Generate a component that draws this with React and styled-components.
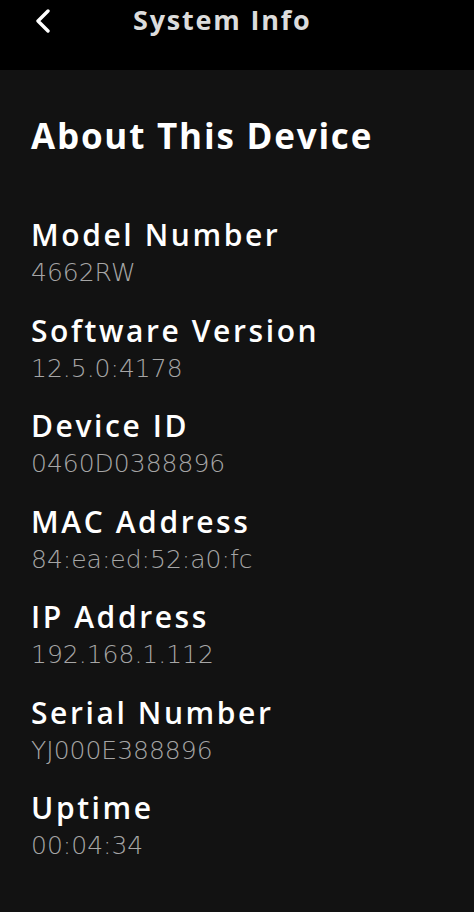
import React from "react";
import styled, { createGlobalStyle } from "styled-components";

const GlobalStyle = createGlobalStyle`
  html, body {
    margin: 0;
    padding: 0;
    background: #121212;
  }
  body {
    font-family: "Open Sans", "Liberation Sans", sans-serif;
  }
`;

const Screen = styled.div`
  width: 474px;
  min-height: 912px;
  background: #121212;
  display: flex;
  flex-direction: column;
`;

const TopBar = styled.header`
  height: 70px;
  background: #000;
  display: flex;
  align-items: flex-start;
`;

const BackButton = styled.button`
  background: none;
  border: none;
  padding: 0;
  margin: 9px 0 0 33px;
  width: 20px;
  height: 24px;
  display: flex;
  align-items: center;
  justify-content: center;
`;

const BarTitle = styled.h1`
  margin: 0 0 0 80px;
  padding-top: 1px;
  font-size: 27px;
  line-height: 38px;
  font-weight: 700;
  color: #dcdcdc;
  letter-spacing: 1.8px;
`;

const Content = styled.main`
  padding: 55px 31px 0 31px;
  display: flex;
  flex-direction: column;
`;

const Heading = styled.h2`
  margin: -12px 0 57px;
  font-size: 35px;
  line-height: 46px;
  font-weight: 700;
  color: #fff;
  letter-spacing: 1.8px;
`;

const InfoList = styled.dl`
  margin: 0;
  display: flex;
  flex-direction: column;
`;

const InfoItem = styled.div`
  height: 95.5px;
`;

const Label = styled.dt`
  font-size: 30px;
  line-height: 38px;
  font-weight: 600;
  color: #fff;
  letter-spacing: 2.6px;
`;

const Value = styled.dd`
  margin: 3px 0 0;
  font-family: "DejaVu Sans", "Open Sans", sans-serif;
  font-size: 25px;
  line-height: 32px;
  font-weight: 200;
  color: #a6a6a6;
`;

const items = [
  ["Model Number", "4662RW"],
  ["Software Version", "12.5.0:4178"],
  ["Device ID", "0460D0388896"],
  ["MAC Address", "84:ea:ed:52:a0:fc"],
  ["IP Address", "192.168.1.112"],
  ["Serial Number", "YJ000E388896"],
  ["Uptime", "00:04:34"],
];

export default function App() {
  return (
    <Screen>
      <GlobalStyle />
      <TopBar>
        <BackButton aria-label="Back">
          <svg width="16" height="24" viewBox="0 0 16 24" fill="none">
            <path d="M13 2 L3 12 L13 22" stroke="#fff" strokeWidth="3.4" strokeLinecap="round" strokeLinejoin="round" />
          </svg>
        </BackButton>
        <BarTitle>System Info</BarTitle>
      </TopBar>
      <Content>
        <Heading>About This Device</Heading>
        <InfoList>
          {items.map(([label, value]) => (
            <InfoItem key={label}>
              <Label>{label}</Label>
              <Value>{value}</Value>
            </InfoItem>
          ))}
        </InfoList>
      </Content>
    </Screen>
  );
}
